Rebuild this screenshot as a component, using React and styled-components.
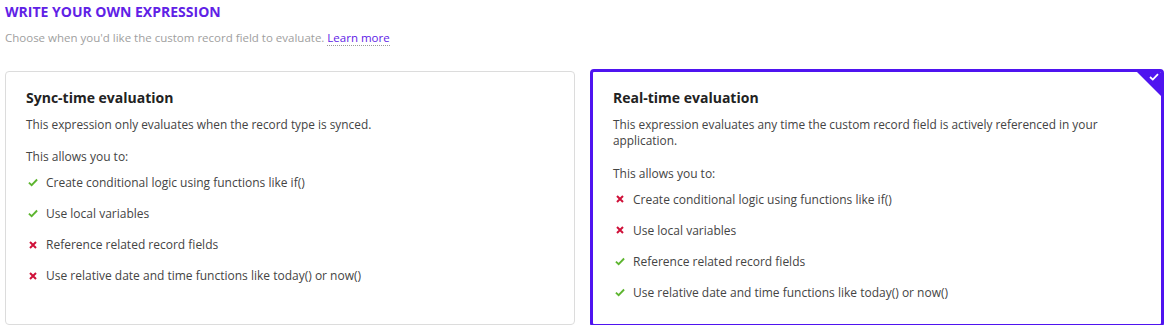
import React from 'react';
import styled, { createGlobalStyle } from 'styled-components';

const GlobalStyle = createGlobalStyle`
  body {
    margin: 0;
    background: #fff;
    font-family: "Open Sans", "Liberation Sans", sans-serif;
  }
`;

const Page = styled.div`
  padding: 3px 8px 0 5px;
`;

const Heading = styled.h2`
  margin: 0;
  font-size: 14px;
  line-height: 18px;
  font-weight: 700;
  color: #6021e6;
`;

const Intro = styled.p`
  margin: 8px 0 0;
  font-size: 11.5px;
  line-height: 17px;
  color: #a0a0a0;
`;

const LearnMore = styled.a`
  color: #6021e6;
  text-decoration: none;
  border-bottom: 1px dotted #999;
`;

const Cards = styled.div`
  display: grid;
  grid-template-columns: 1fr 1fr;
  gap: 17px;
  margin-top: 25px;
`;

const Card = styled.div`
  position: relative;
  background: #fff;
  border-radius: 4px;
  padding: 16px 20px 23px;
  border: ${p => (p.$selected ? '3px solid #4f14f0' : '1px solid #dcdcdc')};
  margin: ${p => (p.$selected ? '-2px' : '0')};
  overflow: hidden;
`;

const Corner = styled.div`
  position: absolute;
  top: 0;
  right: 0;
  width: 0;
  height: 0;
  border-top: 24px solid #4f14f0;
  border-left: 24px solid transparent;
`;

const CornerCheck = styled.svg`
  position: absolute;
  top: 1px;
  right: 2px;
`;

const CardTitle = styled.h3`
  margin: 0;
  font-size: 14px;
  line-height: 20px;
  font-weight: 700;
  color: #222;
`;

const CardText = styled.p`
  margin: 7.5px 0 0;
  font-size: 11.85px;
  line-height: 16.5px;
  color: #444;
`;

const Allows = styled.p`
  margin: 16px 0 0;
  font-size: 12px;
  line-height: 17px;
  color: #444;
`;

const List = styled.ul`
  list-style: none;
  margin: 9px 0 0;
  padding: 0 0 0 2px;
  display: flex;
  flex-direction: column;
  gap: 14px;
`;

const Item = styled.li`
  display: flex;
  align-items: center;
  gap: 8px;
  font-size: 12px;
  line-height: 17px;
  color: #444;
`;

const IconBox = styled.span`
  width: 10px;
  display: inline-flex;
  justify-content: center;
`;

const Check = () => (
  <svg width="11" height="9" viewBox="0 0 11 9">
    <path d="M1 4.6 L4 7.4 L10 1.2" fill="none" stroke="#5db52f" strokeWidth="2" />
  </svg>
);

const Cross = () => (
  <svg width="8" height="8" viewBox="0 0 8 8">
    <path d="M1 1 L7 7 M7 1 L1 7" fill="none" stroke="#cf1139" strokeWidth="2" />
  </svg>
);

const features = [
  'Create conditional logic using functions like if()',
  'Use local variables',
  'Reference related record fields',
  'Use relative date and time functions like today() or now()',
];

const options = [
  {
    title: 'Sync-time evaluation',
    text: 'This expression only evaluates when the record type is synced.',
    allowed: [true, true, false, false],
  },
  {
    title: 'Real-time evaluation',
    text: 'This expression evaluates any time the custom record field is actively referenced in your application.',
    allowed: [false, false, true, true],
    selected: true,
  },
];

const App = () => {
  return (
    <Page>
      <GlobalStyle />
      <Heading>WRITE YOUR OWN EXPRESSION</Heading>
      <Intro>
        Choose when you'd like the custom record field to evaluate. <LearnMore href="#">Learn more</LearnMore>
      </Intro>
      <Cards>
        {options.map(opt => (
          <Card key={opt.title} $selected={opt.selected}>
            {opt.selected && (
              <>
                <Corner />
                <CornerCheck width="10" height="8" viewBox="0 0 10 8">
                  <path d="M1 4 L3.8 6.6 L9 1.2" fill="none" stroke="#fff" strokeWidth="1.8" />
                </CornerCheck>
              </>
            )}
            <CardTitle>{opt.title}</CardTitle>
            <CardText>{opt.text}</CardText>
            <Allows>This allows you to:</Allows>
            <List>
              {features.map((f, i) => (
                <Item key={f}>
                  <IconBox>{opt.allowed[i] ? <Check /> : <Cross />}</IconBox>
                  {f}
                </Item>
              ))}
            </List>
          </Card>
        ))}
      </Cards>
    </Page>
  );
};

export default App;
